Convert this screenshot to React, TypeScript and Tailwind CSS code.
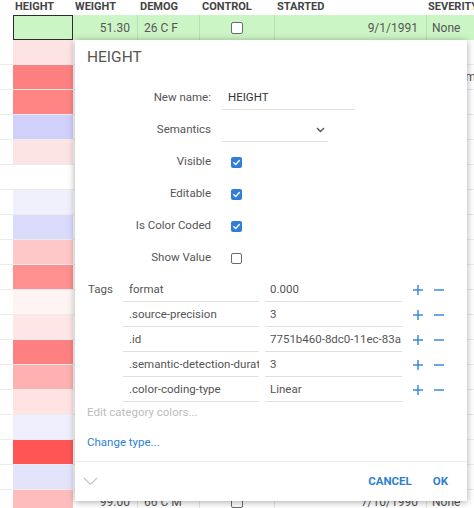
import React from "react";

const cellColors = [
  "#fde3e3", "#ff8080", "#ff8585", "#d0d0fa", "#fde4e4", "#ffffff", "#f0f0fd", "#dadafb", "#ffc8c8", "#ff9090",
  "#fff4f4", "#ffe6e6", "#ff8080", "#ffb0b0", "#ffe3e3", "#eeeefd", "#ff5555", "#e3e3fb", "#ffbcbc",
];

const tags = [
  ["format", "0.000"],
  [".source-precision", "3"],
  [".id", "7751b460-8dc0-11ec-83a"],
  [".semantic-detection-durat", "3"],
  [".color-coding-type", "Linear"],
];

function Check({ checked, size = "w-[11px] h-[11px]" }: { checked: boolean; size?: string }) {
  if (!checked) {
    return <span className={`${size} block rounded-[2px] border-[1.5px] border-[#6b6b6b] bg-white`} />;
  }
  return (
    <span className={`${size} flex items-center justify-center rounded-[2px] bg-[#2f7fd6]`}>
      <svg width="9" height="9" viewBox="0 0 10 10" fill="none">
        <path d="M2 5.2 4.1 7.2 8.2 2.8" stroke="white" strokeWidth="1.6" strokeLinecap="round" strokeLinejoin="round" />
      </svg>
    </span>
  );
}

function GridRow({ color, weight, demog, started, sev }: { color: string; weight?: string; demog?: string; started?: string; sev: string }) {
  return (
    <div className="flex h-[25px] border-b border-[#ececec] text-[12px] text-[#555]">
      <div className="w-[13px] shrink-0" />
      <div className="w-[60px] shrink-0" style={{ background: color }} />
      <div className="w-[65px] shrink-0 flex items-center justify-end pr-[7px] border-r border-[#e6e6e6]">{weight}</div>
      <div className="w-[62px] shrink-0 flex items-center pl-[6px] border-r border-[#e6e6e6]">{demog}</div>
      <div className="w-[75px] shrink-0 flex items-center justify-center border-r border-[#e6e6e6]">
        {weight ? <Check checked={false} size="w-[12px] h-[12px]" /> : null}
      </div>
      <div className="w-[152px] shrink-0 flex items-center justify-end pr-[8px] border-r border-[#e6e6e6]">{started}</div>
      <div className="w-[80px] shrink-0 flex items-center pl-[5px] whitespace-nowrap">{sev}</div>
    </div>
  );
}

function FormRow({ label, children }: { label: string; children: React.ReactNode }) {
  return (
    <div className="flex h-[32px] items-center">
      <div className="w-[136px] shrink-0 text-right text-[11.5px] text-[#555]">{label}</div>
      <div className="ml-[11px] flex items-center">{children}</div>
    </div>
  );
}

function PlusMinus() {
  return (
    <div className="ml-[10px] flex items-center gap-[9px]">
      <svg width="12" height="12" viewBox="0 0 12 12">
        <path d="M6 1v10M1 6h10" stroke="#3b8ad9" strokeWidth="1.5" />
      </svg>
      <svg width="12" height="12" viewBox="0 0 12 12">
        <path d="M1 6h10" stroke="#3b8ad9" strokeWidth="1.5" />
      </svg>
    </div>
  );
}

export default function App() {
  return (
    <div className="relative h-[508px] w-[474px] overflow-hidden bg-white font-['Roboto',sans-serif]">
      <div className="flex h-[15px] items-center text-[11px] font-bold text-[#444] whitespace-nowrap">
        <div className="w-[13px] shrink-0" />
        <div className="w-[60px] shrink-0 pl-[2px]">HEIGHT</div>
        <div className="w-[65px] shrink-0 pl-[2px]">WEIGHT</div>
        <div className="w-[62px] shrink-0 pl-[2px]">DEMOG</div>
        <div className="w-[75px] shrink-0 pl-[2px]">CONTROL</div>
        <div className="w-[152px] shrink-0 pl-[2px]">STARTED</div>
        <div className="w-[80px] shrink-0 pl-[1px]">SEVERITY</div>
      </div>

      <div className="flex h-[25px] bg-[#ccf5c6] text-[12px] text-[#555]">
        <div className="w-[13px] shrink-0 bg-white" />
        <div className="w-[60px] shrink-0 border border-[#2d2d2d]" />
        <div className="w-[65px] shrink-0 flex items-center justify-end pr-[7px] border-r border-[#b9e2b3]">51.30</div>
        <div className="w-[62px] shrink-0 flex items-center pl-[6px] border-r border-[#b9e2b3]">26 C F</div>
        <div className="w-[75px] shrink-0 flex items-center justify-center border-r border-[#b9e2b3]">
          <Check checked={false} size="w-[12px] h-[12px]" />
        </div>
        <div className="w-[152px] shrink-0 flex items-center justify-end pr-[8px] border-r border-[#b9e2b3]">9/1/1991</div>
        <div className="w-[80px] shrink-0 flex items-center pl-[5px]">None</div>
      </div>

      {cellColors.map((c, i) => (
        <GridRow
          key={i}
          color={c}
          sev={i === 1 ? "Medium" : "None"}
          weight={i === 18 ? "99.00" : undefined}
          demog={i === 18 ? "66 C M" : undefined}
          started={i === 18 ? "7/10/1990" : undefined}
        />
      ))}

      <div className="absolute left-[75px] top-[40px] w-[392px] bg-white shadow-[0_1px_7px_rgba(0,0,0,0.35)]">
        <div className="pl-[12px] pt-[8px] text-[15.5px] leading-[18px] text-[#555]">HEIGHT</div>

        <div className="mt-[16px]">
          <FormRow label="New name:">
            <div className="flex h-[24px] w-[133px] items-center border-b border-[#e0e0e0] pl-[6px] text-[11.5px] text-[#333]">HEIGHT</div>
          </FormRow>
          <FormRow label="Semantics">
            <div className="flex h-[24px] w-[106px] items-center justify-end border-b border-[#e0e0e0] pr-[3px]">
              <svg width="9" height="6" viewBox="0 0 9 6" fill="none">
                <path d="M1 1l3.5 3.5L8 1" stroke="#555" strokeWidth="1.4" />
              </svg>
            </div>
          </FormRow>
          <FormRow label="Visible">
            <span className="ml-[9px]"><Check checked /></span>
          </FormRow>
          <FormRow label="Editable">
            <span className="ml-[9px]"><Check checked /></span>
          </FormRow>
          <FormRow label="Is Color Coded">
            <span className="ml-[9px]"><Check checked /></span>
          </FormRow>
          <FormRow label="Show Value">
            <span className="ml-[9px]"><Check checked={false} /></span>
          </FormRow>
        </div>

        <div className="mt-[3px] text-[11.5px]">
          {tags.map(([k, v], i) => (
            <div key={k} className="flex h-[25px] items-start">
              <div className="w-[48px] shrink-0 pl-[13px] leading-[25px] text-[#555]">{i === 0 ? "Tags" : ""}</div>
              <div className="h-[25px] w-[136px] shrink-0 overflow-hidden whitespace-nowrap border-b border-[#e0e0e0] pl-[6px] leading-[24px] text-[#555]">{k}</div>
              <div className="ml-[6px] h-[25px] w-[137px] shrink-0 overflow-hidden whitespace-nowrap border-b border-[#e0e0e0] pl-[5px] leading-[24px] text-[#555]">{v}</div>
              <div className="flex h-[25px] items-center">
                <PlusMinus />
              </div>
            </div>
          ))}
        </div>

        <div className="h-[20px] pl-[12px] text-[11.5px] leading-[20px] text-[#bdbdbd]">Edit category colors...</div>
        <div className="mt-[10px] h-[20px] pl-[12px] text-[11.5px] leading-[20px] text-[#2f7fd0]">Change type...</div>

        <div className="mt-[9px] border-t border-[#ececec]" />
        <div className="flex h-[39px] items-center pl-[8px] pr-[19px]">
          <svg width="15" height="9" viewBox="0 0 15 9" fill="none">
            <path d="M1 1l6.5 6.5L14 1" stroke="#c4c4c4" strokeWidth="1.2" />
          </svg>
          <div className="flex-1" />
          <span className="text-[11.5px] font-bold text-[#2f7fd0]">CANCEL</span>
          <span className="ml-[21px] text-[11.5px] font-bold text-[#2f7fd0]">OK</span>
        </div>
      </div>
    </div>
  );
}
